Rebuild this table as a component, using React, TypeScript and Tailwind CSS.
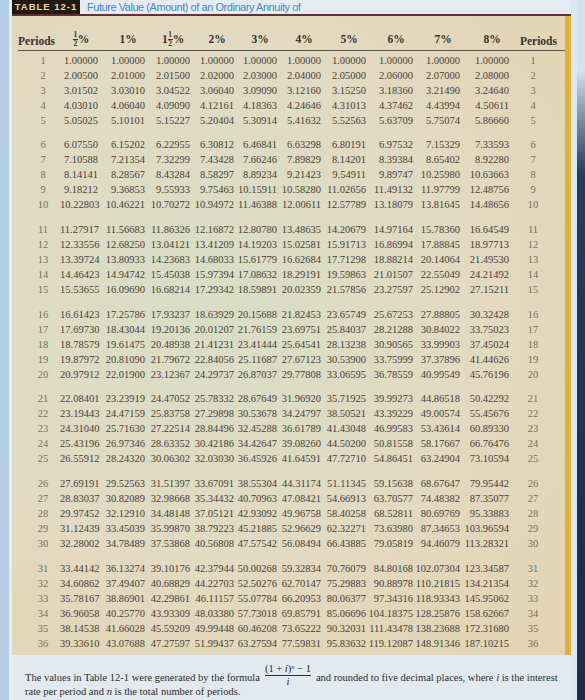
const RATES = [0.005, 0.01, 0.015, 0.02, 0.03, 0.04, 0.05, 0.06, 0.07, 0.08];

const GROUPS = [
  [1, 2, 3, 4, 5],
  [6, 7, 8, 9, 10],
  [11, 12, 13, 14, 15],
  [16, 17, 18, 19, 20],
  [21, 22, 23, 24, 25],
  [26, 27, 28, 29, 30],
  [31, 32, 33, 34, 35, 36],
];

// column widths line up the right edges of the number columns with the print
const GRID =
  "grid grid-cols-[42px_38px_47px_45px_44px_43px_44px_45px_47px_47px_49px_48px]";

function amount(i: number, n: number) {
  return ((Math.pow(1 + i, n) - 1) / i).toFixed(5);
}

function Half() {
  return (
    <span className="inline-flex flex-col items-center text-[7.5px] leading-[7.5px]">
      <span>1</span>
      <span className="h-px w-[5px] bg-[#3a3632]" />
      <span>2</span>
    </span>
  );
}

function Head({ children }: { children: React.ReactNode }) {
  return (
    <div className="flex justify-end">
      <span className="flex w-[34px] items-center justify-center text-[11.5px] font-bold">
        {children}
      </span>
    </div>
  );
}

export default function App() {
  return (
    <div className="flex h-[700px] w-[585px] overflow-hidden bg-[#e2eaf0] font-['Liberation_Serif',serif]">
      {/* left edge of the photo */}
      <div className="flex w-[12px]">
        <div className="w-[9px] bg-[#b2cde4]" />
        <div className="w-[3px] bg-[#e6eef4]" />
      </div>

      <div className="flex w-[559px] flex-col">
        <div className="flex h-[14px] items-center bg-[#e4ecf1]">
          <div className="flex h-full w-[68px] items-center justify-center bg-[#221915] font-['Liberation_Sans',sans-serif] text-[9.5px] font-bold tracking-[1px] text-[#eed9a2]">
            TABLE 12-1
          </div>
          <span className="ml-[7px] font-['Liberation_Sans',sans-serif] text-[11px] leading-[14px] tracking-[-0.45px] text-[#4b87c4]">
            Future Value (Amount) of an Ordinary Annuity of
          </span>
        </div>
        <div className="h-[2px] bg-[#6d2a31]" />

        <div className="flex h-[639px]">
          <div className="w-[553px] bg-[radial-gradient(ellipse_at_35%_45%,#d8dec5_0%,#e2dac2_50%,#e4d3b1_100%)] pl-[6px] text-[#46403a]">
            <div className={`${GRID} h-[35px] items-end border-b border-[#57524c] pb-[2px] text-[#37332f]`}>
              <div className="text-[11.5px] font-bold leading-[14px]">Periods</div>
              <Head>
                <Half />
                <span>%</span>
              </Head>
              <Head>1%</Head>
              <Head>
                <span>1</span>
                <Half />
                <span>%</span>
              </Head>
              <Head>2%</Head>
              <Head>3%</Head>
              <Head>4%</Head>
              <Head>5%</Head>
              <Head>6%</Head>
              <Head>7%</Head>
              <Head>8%</Head>
              <div className="text-right text-[11.5px] font-bold leading-[14px]">Periods</div>
            </div>

            <div className="pt-[1.5px]">
              {GROUPS.map((group, g) => (
                <div key={g} className={g > 0 ? "mt-[9.7px]" : ""}>
                  {group.map((n) => (
                    <div key={n} className={`${GRID} h-[15px] text-[10.5px] leading-[15px]`}>
                      <div className="pl-[8px] text-center text-[#786e62]">{n}</div>
                      {RATES.map((r) => (
                        <div key={r} className="text-right">
                          {amount(r, n)}
                        </div>
                      ))}
                      <div className="text-center text-[#786e62]">{n}</div>
                    </div>
                  ))}
                </div>
              ))}
            </div>
          </div>
          <div className="w-[6px] bg-[#e0b03c]" />
        </div>

        <div className="h-[45px] pl-[13px] text-[10.5px] text-[#2e2a2b]">
          <div className="flex h-[30px] items-end">
            <span className="leading-[14px]">The values in Table 12-1 were generated by the formula</span>
            <span className="mx-[5px] mb-[-3px] inline-flex flex-col items-center text-[10.5px]">
              <span className="pb-[1px] leading-[10px]">
                (1 + <i>i</i>)<sup className="text-[6.5px]"><i>n</i></sup> − 1
              </span>
              <span className="h-px w-full bg-[#2e2a2b]" />
              <span className="leading-[12px]">
                <i>i</i>
              </span>
            </span>
            <span className="leading-[14px]">
              and rounded to five decimal places, where <i>i</i> is the interest
            </span>
          </div>
          <div className="leading-[14px]">
            rate per period and <i>n</i> is the total number of periods.
          </div>
        </div>
      </div>

      {/* right edge of the photo */}
      <div className="flex w-[14px]">
        <div className="w-[6px] bg-[#dbe8f2]" />
        <div className="w-[8px] bg-linear-to-b from-[#d3e2ee] from-10% via-[#263a5b] via-25% to-[#1b2b48]" />
      </div>
    </div>
  );
}
